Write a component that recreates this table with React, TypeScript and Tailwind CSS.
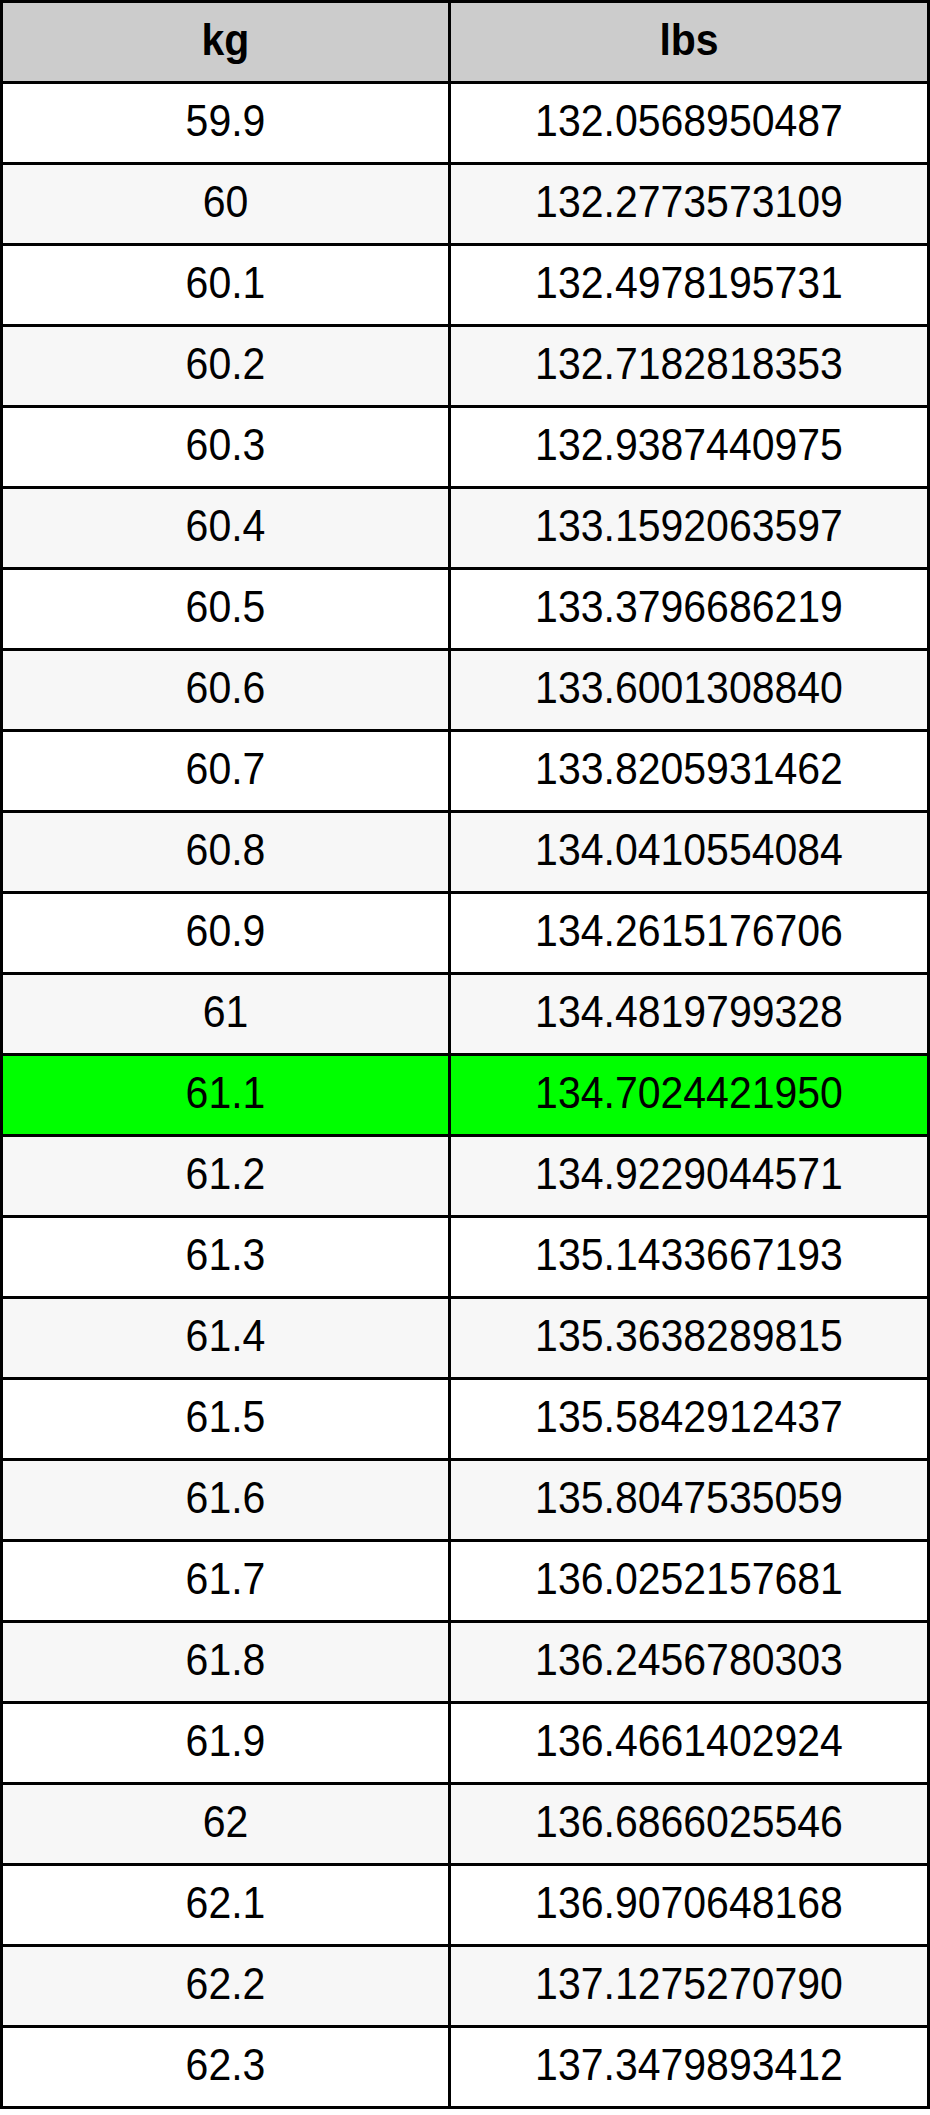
import React from "react";

const rows: [string, string][] = [
  ["59.9", "132.0568950487"],
  ["60", "132.2773573109"],
  ["60.1", "132.4978195731"],
  ["60.2", "132.7182818353"],
  ["60.3", "132.9387440975"],
  ["60.4", "133.1592063597"],
  ["60.5", "133.3796686219"],
  ["60.6", "133.6001308840"],
  ["60.7", "133.8205931462"],
  ["60.8", "134.0410554084"],
  ["60.9", "134.2615176706"],
  ["61", "134.4819799328"],
  ["61.1", "134.7024421950"],
  ["61.2", "134.9229044571"],
  ["61.3", "135.1433667193"],
  ["61.4", "135.3638289815"],
  ["61.5", "135.5842912437"],
  ["61.6", "135.8047535059"],
  ["61.7", "136.0252157681"],
  ["61.8", "136.2456780303"],
  ["61.9", "136.4661402924"],
  ["62", "136.6866025546"],
  ["62.1", "136.9070648168"],
  ["62.2", "137.1275270790"],
  ["62.3", "137.3479893412"],
];

function Cell({ children, left, bold }: { children: React.ReactNode; left?: boolean; bold?: boolean }) {
  return (
    <div
      className={
        "flex h-[78px] items-center justify-center pb-[3px] " +
        (left ? "w-[448px] border-r-[3px] border-black" : "flex-1")
      }
    >
      <span
        className={
          "inline-block scale-y-110 text-[41px] leading-none text-black " + (bold ? "font-bold" : "font-normal")
        }
      >
        {children}
      </span>
    </div>
  );
}

export default function App() {
  return (
    <div className="w-[930px] bg-white" style={{ fontFamily: '"Liberation Sans", Arial, sans-serif' }}>
      <div className="flex flex-col border-[3px] border-black">
        <div className="flex border-b-[3px] border-black bg-[#cccccc]">
          <Cell left bold>kg</Cell>
          <Cell bold>lbs</Cell>
        </div>
        {rows.map(([kg, lbs], i) => {
          const hl = kg === "61.1";
          const bg = hl ? "bg-[#00ff00]" : i % 2 === 0 ? "bg-white" : "bg-[#f7f7f7]";
          const last = i === rows.length - 1;
          return (
            <div key={kg} className={"flex " + bg + (last ? "" : " border-b-[3px] border-black")}>
              <Cell left>{kg}</Cell>
              <Cell>{lbs}</Cell>
            </div>
          );
        })}
      </div>
    </div>
  );
}
